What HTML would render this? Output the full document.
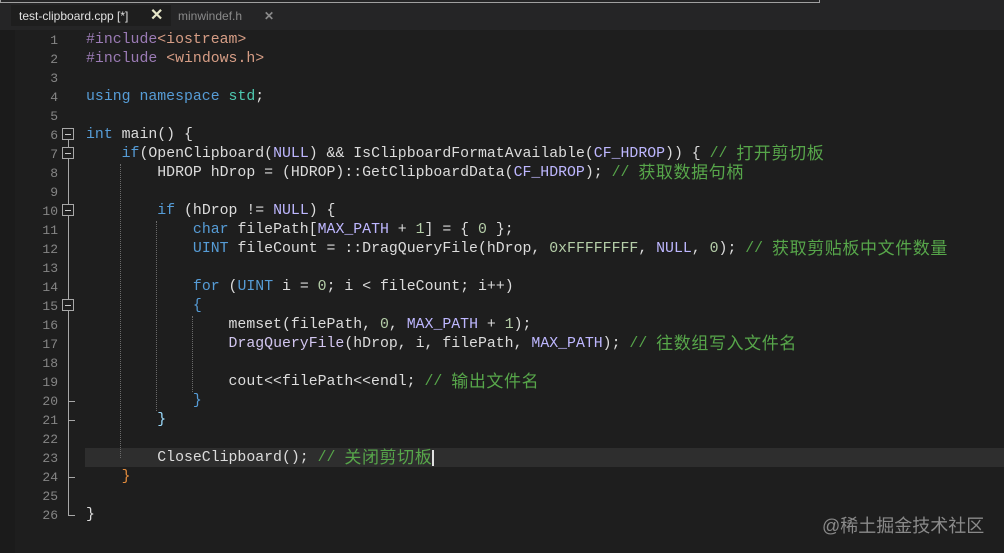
<!DOCTYPE html>
<html><head><meta charset="utf-8"><style>
body{margin:0;width:1004px;height:553px;background:#1e1e1e;overflow:hidden;position:relative;font-family:"Liberation Mono","Noto Sans CJK SC",monospace;}
.tabbar{position:absolute;left:0;top:0;width:1004px;height:30px;background:#252526;}
.topbox{position:absolute;left:0;top:-2px;width:818px;height:4px;border:1px solid #a0a0a0;border-top:none;}
.tab{position:absolute;top:6px;height:20px;font:12px "Liberation Sans",sans-serif;line-height:20px;}
.l{position:absolute;left:0;height:19px;line-height:19px;font-size:14.85px;white-space:pre;color:#dcdcdc;width:1004px}
.n{position:absolute;left:0;width:58px;text-align:right;color:#868686;font-size:13px}
.c{position:absolute;left:86px;top:0px}
.k{color:#569cd6}.p{color:#9b7bb5}.s{color:#d69d85}.m{color:#beb7ff}.num{color:#b5cea8}.cm{color:#57a64a}.ty{color:#4ec9b0}
.z{display:inline-block;vertical-align:top;height:19px;font-family:"Noto Sans CJK SC",sans-serif;font-size:17px;letter-spacing:0.6px;line-height:19px;position:relative;top:-3px}
.fold{position:absolute;left:62px;width:12px;height:12px;border:1px solid #a8a8a8;box-sizing:border-box;background:#1e1e1e}
.fold:after{content:"";position:absolute;left:2px;top:5px;width:6px;height:1px;background:#c8c8c8}
.vl{position:absolute;width:1px;background:#a8a8a8}
.dot{position:absolute;width:0;border-left:1px dotted #6a6a6a}
</style></head><body>
<div class="tabbar"></div>
<div class="topbox"></div>
<div style="position:absolute;left:11px;top:5px;width:160px;height:21px;background:#1e1e1e"></div>
<div class="tab" style="left:19px;color:#e0e0e0">test-clipboard.cpp [*]</div>
<div class="tab" style="left:150px;color:#e6e6c8;font-size:16px;font-weight:bold">✕</div>
<div class="tab" style="left:178px;color:#8a8a8a">minwindef.h</div>
<div class="tab" style="left:264px;color:#8a8a8a;font-size:12px;font-weight:bold">✕</div>
<div style="position:absolute;left:0;top:30px;width:15px;height:523px;background:#1b1b1b"></div>
<div style="position:absolute;left:85px;top:448px;width:919px;height:19px;background:#2e2e2e"></div>
<div class="vl" style="left:68px;top:138px;height:378px"></div>
<div class="vl" style="left:68px;top:515px;width:7px;height:1px"></div>
<div class="vl" style="left:68px;top:420px;width:7px;height:1px"></div>
<div class="vl" style="left:68px;top:401px;width:7px;height:1px"></div>
<div class="vl" style="left:68px;top:477px;width:7px;height:1px"></div>
<div class="dot" style="left:120px;top:164px;height:294px"></div>
<div class="dot" style="left:156px;top:221px;height:190px"></div>
<div class="dot" style="left:192px;top:316px;height:76px"></div>
<div class="fold" style="top:128px"></div>
<div class="fold" style="top:147px"></div>
<div class="fold" style="top:204px"></div>
<div class="fold" style="top:299px"></div>
<div class="l" style="top:31px"><span class="n">1</span><span class="c"><span class="p">#include</span><span class="s">&lt;iostream&gt;</span></span></div>
<div class="l" style="top:50px"><span class="n">2</span><span class="c"><span class="p">#include</span> <span class="s">&lt;windows.h&gt;</span></span></div>
<div class="l" style="top:69px"><span class="n">3</span></div>
<div class="l" style="top:88px"><span class="n">4</span><span class="c"><span class="k">using namespace</span> <span class="ty">std</span>;</span></div>
<div class="l" style="top:107px"><span class="n">5</span></div>
<div class="l" style="top:126px"><span class="n">6</span><span class="c"><span class="k">int</span> main() {</span></div>
<div class="l" style="top:145px"><span class="n">7</span><span class="c">    <span class="k">if</span>(OpenClipboard(<span class="m">NULL</span>) &amp;&amp; IsClipboardFormatAvailable(<span class="m">CF_HDROP</span>)) { <span class="cm">// <span class="z">打开剪切板</span></span></span></div>
<div class="l" style="top:164px"><span class="n">8</span><span class="c">        HDROP hDrop = (HDROP)::GetClipboardData(<span class="m">CF_HDROP</span>); <span class="cm">// <span class="z">获取数据句柄</span></span></span></div>
<div class="l" style="top:183px"><span class="n">9</span></div>
<div class="l" style="top:202px"><span class="n">10</span><span class="c">        <span class="k">if</span> (hDrop != <span class="m">NULL</span>) {</span></div>
<div class="l" style="top:221px"><span class="n">11</span><span class="c">            <span class="k">char</span> filePath[<span class="m">MAX_PATH</span> + <span class="num">1</span>] = { <span class="num">0</span> };</span></div>
<div class="l" style="top:240px"><span class="n">12</span><span class="c">            <span class="k">UINT</span> fileCount = ::DragQueryFile(hDrop, <span class="num">0xFFFFFFFF</span>, <span class="m">NULL</span>, <span class="num">0</span>); <span class="cm">// <span class="z">获取剪贴板中文件数量</span></span></span></div>
<div class="l" style="top:259px"><span class="n">13</span></div>
<div class="l" style="top:278px"><span class="n">14</span><span class="c">            <span class="k">for</span> (<span class="k">UINT</span> i = <span class="num">0</span>; i &lt; fileCount; i++)</span></div>
<div class="l" style="top:297px"><span class="n">15</span><span class="c">            <span class="k">{</span></span></div>
<div class="l" style="top:316px"><span class="n">16</span><span class="c">                memset(filePath, <span class="num">0</span>, <span class="m">MAX_PATH</span> + <span class="num">1</span>);</span></div>
<div class="l" style="top:335px"><span class="n">17</span><span class="c">                <span style="color:#d2c6f0">DragQueryFile</span>(hDrop, i, filePath, <span class="m">MAX_PATH</span>); <span class="cm">// <span class="z">往数组写入文件名</span></span></span></div>
<div class="l" style="top:354px"><span class="n">18</span></div>
<div class="l" style="top:373px"><span class="n">19</span><span class="c">                cout&lt;&lt;filePath&lt;&lt;endl; <span class="cm">// <span class="z">输出文件名</span></span></span></div>
<div class="l" style="top:392px"><span class="n">20</span><span class="c">            <span class="k">}</span></span></div>
<div class="l" style="top:411px"><span class="n">21</span><span class="c">        <span style="color:#9cdcfe">}</span></span></div>
<div class="l" style="top:430px"><span class="n">22</span></div>
<div class="l" style="top:449px"><span class="n">23</span><span class="c">        CloseClipboard(); <span class="cm">// <span class="z">关闭剪切板</span></span><span style="border-left:2px solid #e0e0e0"></span></span></div>
<div class="l" style="top:468px"><span class="n">24</span><span class="c">    <span style="color:#e08a3c">}</span></span></div>
<div class="l" style="top:487px"><span class="n">25</span></div>
<div class="l" style="top:506px"><span class="n">26</span><span class="c">}</span></div>
<div style="position:absolute;left:822px;top:512px;font:18px 'Liberation Sans','Noto Sans CJK SC',sans-serif;color:#8a8a8a">@稀土掘金技术社区</div>
</body></html>
